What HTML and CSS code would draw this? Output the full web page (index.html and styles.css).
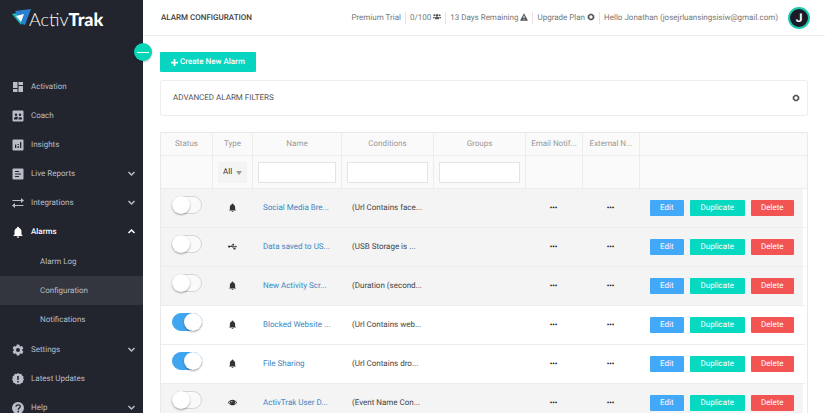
FILE: index.html
```html
<!DOCTYPE html>
<html lang="en">
<head>
<meta charset="utf-8">
<title>Alarm Configuration</title>
<link rel="stylesheet" href="styles.css">
</head>
<body>
<svg class="defs" aria-hidden="true">
  <symbol id="bell" viewBox="0 0 24 24"><path d="M12 1.500a2 2 0 0 0-2 2v.6C7 5 5 7.600 5 11v6l-2 2v1h18v-1l-2-2v-6c0-3.400-2-6-5-6.900v-.6a2 2 0 0 0-2-2zM9.500 21a2.500 2.500 0 0 0 5 0z"/></symbol>
  <symbol id="usb" viewBox="0 0 24 24"><g fill="none" stroke="currentColor" stroke-width="2"><path d="M3 12h18M6 12c4 0 3-5 8-5M9 12c4 0 3 5 8 5"/></g><circle cx="3" cy="12" r="3"/><circle cx="14" cy="7" r="2.500"/><path d="M20 9l4 3-4 3zM15 15h5v5h-5z"/></symbol>
  <symbol id="eye" viewBox="0 0 24 24"><path fill-rule="evenodd" d="M0 12C3 7 7 4.500 12 4.500S21 7 24 12c-3 5-7 7.500-12 7.500S3 17 0 12zm2.500 0c1 1.800 2.800 3.500 5 4.500a6 6 0 0 1 0-9c-2.200 1-4 2.700-5 4.500zm19 0c-1-1.800-2.800-3.500-5-4.500a6 6 0 0 1 0 9c2.200-1 4-2.700 5-4.500zM12 7.500a4 4 0 0 0-4 4h1.500A2.500 2.500 0 0 1 12 9z"/></symbol>
  <symbol id="down" viewBox="0 0 12 12"><path d="M2 4l4 4 4-4" fill="none" stroke="currentColor" stroke-width="2"/></symbol>
  <symbol id="up" viewBox="0 0 12 12"><path d="M2 8l4-4 4 4" fill="none" stroke="currentColor" stroke-width="2"/></symbol>
  <symbol id="ring" viewBox="0 0 24 24"><path fill-rule="evenodd" d="M8.500 2h7L22 8.500v7L15.500 22h-7L2 15.500v-7zM12 7a5 5 0 1 0 0 10 5 5 0 0 0 0-10z"/></symbol>
</svg>
<div class="app">
  <aside class="sidebar">
    <a class="logo" href="#">
      <svg class="logo-mark" viewBox="0 0 19 17" aria-hidden="true"><path fill="#18b9bd" d="M0 5l13-3-4 14z"/><path fill="#2a7fd0" d="M3 2l16-2-6 16-3-1z"/><path fill="#fff" d="M4 7l8-2-3 8z"/></svg>
      <span class="logo-text">Activ<b>Trak</b></span>
    </a>
    <button class="collapse" type="button" aria-label="Collapse menu"><span class="dash"></span></button>
    <nav class="nav">
      <a href="#"><svg class="icon" viewBox="0 0 24 24"><path d="M2 2h9v12H2zM13 2h9v6h-9zM13 10h9v12h-9zM2 16h9v6H2z"/></svg><span>Activation</span></a>
      <a href="#"><svg class="icon" viewBox="0 0 24 24"><path fill-rule="evenodd" d="M3 1h18a2 2 0 0 1 2 2v18a2 2 0 0 1-2 2H3a2 2 0 0 1-2-2V3a2 2 0 0 1 2-2zm5 6a2.500 2.500 0 1 0 0 5 2.500 2.500 0 0 0 0-5zm8 0a2.500 2.500 0 1 0 0 5 2.500 2.500 0 0 0 0-5zM4 19h7v-1c0-2 .5-3 1.500-4-3-1.500-8.500-.5-8.500 3zm9 0h7v-2c0-3-7-3.500-7 0z"/></svg><span>Coach</span></a>
      <a href="#"><svg class="icon" viewBox="0 0 24 24"><path fill-rule="evenodd" d="M3 1h18a2 2 0 0 1 2 2v18a2 2 0 0 1-2 2H3a2 2 0 0 1-2-2V3a2 2 0 0 1 2-2zm3 10v7h2.500v-7zm5 3v4h2.500v-4zm0-4v2h2.500v-2zm5-4v12h2.500V6z"/></svg><span>Insights</span></a>
      <a href="#"><svg class="icon" viewBox="0 0 24 24"><path fill-rule="evenodd" d="M3 1h18a2 2 0 0 1 2 2v18a2 2 0 0 1-2 2H3a2 2 0 0 1-2-2V3a2 2 0 0 1 2-2zm3 5v2h8V6zm0 5v2h12v-2zm0 5v2h8v-2z"/></svg><span>Live Reports</span><svg class="chevron"><use href="#down"/></svg></a>
      <a href="#"><svg class="icon" viewBox="0 0 24 24"><path d="M1 6h17V2l6 5-6 5V8H1zM23 16H6v-4l-6 5 6 5v-4h17z"/></svg><span>Integrations</span><svg class="chevron"><use href="#down"/></svg></a>
      <a class="open" href="#"><svg class="icon"><use href="#bell"/></svg><span>Alarms</span><svg class="chevron"><use href="#up"/></svg></a>
      <div class="subnav">
        <a href="#">Alarm Log</a>
        <a class="current" href="#">Configuration</a>
        <a href="#">Notifications</a>
      </div>
      <a href="#"><svg class="icon" viewBox="0 0 24 24"><path fill-rule="evenodd" d="M9.500 1h5l.7 3 2 1.200 3-1 2.500 4.300L20.500 11v2l2.200 2.500-2.500 4.300-3-1-2 1.200-.7 3h-5l-.7-3-2-1.200-3 1-2.500-4.300L3.500 13v-2L1.300 8.500l2.500-4.300 3 1 2-1.200zM12 8a4 4 0 1 0 0 8 4 4 0 0 0 0-8z"/></svg><span>Settings</span><svg class="chevron"><use href="#down"/></svg></a>
      <a href="#"><svg class="icon" viewBox="0 0 24 24"><path fill-rule="evenodd" d="M12 0l3 2 3.500-.5L20 5l3 2-.5 3.500L24 13l-2 3-.5 3.500-3.500 1-2.500 2.500-3.500-.8L8.500 23 6 20.500l-3.500-1L2 16l-2-3 1.500-2.500L1 7l3-2 1.500-3.500L9 2zm-1.500 6v8h3V6zm0 10v3h3v-3z"/></svg><span>Latest Updates</span></a>
      <a href="#"><svg class="icon" viewBox="0 0 24 24"><circle cx="12" cy="12" r="12"/><path d="M8 9.500c0-5.500 8.500-5 8.500-.5 0 3-4 3-4 6.500" fill="none" stroke="#22252e" stroke-width="2.500"/><path d="M11 17.500h3v3h-3z" fill="#22252e"/></svg><span>Help</span><svg class="chevron"><use href="#down"/></svg></a>
    </nav>
  </aside>
  <div class="page">
    <header class="topbar">
      <h1>ALARM CONFIGURATION</h1>
      <div class="account">
        <span>Premium Trial</span>
        <span>0/100 <svg class="glyph people" viewBox="0 0 24 24"><circle cx="12" cy="7" r="4"/><circle cx="4" cy="7" r="3"/><circle cx="20" cy="7" r="3"/><path d="M0 12h5v4H0zM19 12h5v4h-5zM6 13q6-3 12 0v6H6z"/></svg></span>
        <span>13 Days Remaining <svg class="glyph" viewBox="0 0 24 24"><path fill-rule="evenodd" d="M12 1l12 22H0zm-1.500 7v7h3V8zm0 9v3h3v-3z"/></svg></span>
        <span>Upgrade Plan <svg class="glyph"><use href="#ring"/></svg></span>
        <span>Hello Jonathan (josejrluansingsisiw@gmail.com)</span>
      </div>
      <button class="avatar" type="button">J</button>
    </header>
    <main>
      <button class="btn create" type="button"><svg class="plus" viewBox="0 0 8 8"><path d="M3 0h2v3h3v2H5v3H3V5H0V3h3z"/></svg>Create New Alarm</button>
      <section class="filters">
        <h2>ADVANCED ALARM FILTERS</h2>
        <button class="expand" type="button" aria-label="Show filters"><svg class="glyph"><use href="#ring"/></svg></button>
      </section>
      <div class="grid">
        <table>
          <colgroup><col class="c-status"><col class="c-type"><col class="c-name"><col class="c-text"><col class="c-text"><col class="c-notify"><col class="c-notify"><col></colgroup>
          <thead>
            <tr class="titles"><th>Status</th><th>Type</th><th>Name</th><th>Conditions</th><th>Groups</th><th>Email Notif...</th><th>External N...</th><th></th></tr>
            <tr class="search"><td></td><td><span class="select"><select aria-label="Type"><option>All</option></select></span></td><td><input type="text" aria-label="Name"></td><td><input type="text" aria-label="Conditions"></td><td><input type="text" aria-label="Groups"></td><td></td><td></td><td></td></tr>
          </thead>
          <tbody>
            <tr class="off"><td><input class="switch" type="checkbox" aria-label="Social Media"></td><td class="mid"><svg class="kind"><use href="#bell"/></svg></td><td><a href="#">Social Media Bre...</a></td><td>(Url Contains face...</td><td></td><td class="mid"><b class="dots">•••</b></td><td class="mid"><b class="dots">•••</b></td><td><div class="actions"><button class="btn edit">Edit</button><button class="btn copy">Duplicate</button><button class="btn delete">Delete</button></div></td></tr>
            <tr class="off"><td><input class="switch" type="checkbox" aria-label="Data saved"></td><td class="mid"><svg class="kind wide"><use href="#usb"/></svg></td><td><a href="#">Data saved to US...</a></td><td>(USB Storage is ...</td><td></td><td class="mid"><b class="dots">•••</b></td><td class="mid"><b class="dots">•••</b></td><td><div class="actions"><button class="btn edit">Edit</button><button class="btn copy">Duplicate</button><button class="btn delete">Delete</button></div></td></tr>
            <tr class="off"><td><input class="switch" type="checkbox" aria-label="New Activity"></td><td class="mid"><svg class="kind"><use href="#bell"/></svg></td><td><a href="#">New Activity Scr...</a></td><td>(Duration (second...</td><td></td><td class="mid"><b class="dots">•••</b></td><td class="mid"><b class="dots">•••</b></td><td><div class="actions"><button class="btn edit">Edit</button><button class="btn copy">Duplicate</button><button class="btn delete">Delete</button></div></td></tr>
            <tr><td><input class="switch" type="checkbox" checked aria-label="Blocked Website"></td><td class="mid"><svg class="kind"><use href="#bell"/></svg></td><td><a href="#">Blocked Website ...</a></td><td>(Url Contains web...</td><td></td><td class="mid"><b class="dots">•••</b></td><td class="mid"><b class="dots">•••</b></td><td><div class="actions"><button class="btn edit">Edit</button><button class="btn copy">Duplicate</button><button class="btn delete">Delete</button></div></td></tr>
            <tr><td><input class="switch" type="checkbox" checked aria-label="File Sharing"></td><td class="mid"><svg class="kind"><use href="#bell"/></svg></td><td><a href="#">File Sharing</a></td><td>(Url Contains dro...</td><td></td><td class="mid"><b class="dots">•••</b></td><td class="mid"><b class="dots">•••</b></td><td><div class="actions"><button class="btn edit">Edit</button><button class="btn copy">Duplicate</button><button class="btn delete">Delete</button></div></td></tr>
            <tr class="off"><td><input class="switch" type="checkbox" aria-label="ActivTrak User"></td><td class="mid"><svg class="kind"><use href="#eye"/></svg></td><td><a href="#">ActivTrak User D...</a></td><td>(Event Name Con...</td><td></td><td class="mid"><b class="dots">•••</b></td><td class="mid"><b class="dots">•••</b></td><td><div class="actions"><button class="btn edit">Edit</button><button class="btn copy">Duplicate</button><button class="btn delete">Delete</button></div></td></tr>
          </tbody>
        </table>
      </div>
    </main>
  </div>
</div>
</body>
</html>
```
FILE: styles.css
```css
* { box-sizing: border-box; }

body {
  margin: 0;
  overflow: hidden;
  background: #fff;
  color: #444;
  font: 8px/12px Roboto, sans-serif;
  text-rendering: geometricPrecision;
}

button, input, select { font: inherit; margin: 0; text-rendering: inherit; }
a { text-decoration: none; }
svg { fill: currentColor; flex: none; }
.defs { display: none; }

.app {
  display: flex;
  height: 100vh;
}

/* Sidebar */
.sidebar {
  position: relative;
  flex: none;
  width: 143px;
  background: #22252e;
  color: #b9bdc9;
}

.logo {
  display: flex;
  height: 72px;
  padding: 9px 0 0 12px;
  color: #fff;
}

.logo-mark { width: 19px; height: 17px; }

.logo-text {
  margin-left: -2px;
  font: 300 18px/20px Lato, sans-serif;
}

.logo-text b { font-weight: 900; }

.collapse {
  position: absolute;
  top: 43px;
  right: -9px;
  display: grid;
  place-items: center;
  width: 18px;
  height: 18px;
  padding: 0;
  border: 0;
  border-radius: 50%;
  background: #07d5b8;
  box-shadow: 0 1px 2px rgba(0, 0, 0, .3);
}

.dash { width: 12px; height: 1px; background: #fff; }

.nav a {
  display: flex;
  align-items: center;
  height: 29px;
  padding: 0 7px 0 12px;
  color: inherit;
}

.nav .icon { width: 12px; height: 12px; margin-right: 7px; }
.nav .chevron { width: 9px; height: 9px; margin-left: auto; }
.nav .open { color: #fff; font-weight: 500; }
.subnav { padding: 1px 0; }
.nav .subnav a { padding-left: 40px; }
.nav .subnav .current { background: #34363f; }

/* Top bar */
.page { flex: 1; min-width: 0; }

.topbar {
  display: flex;
  align-items: center;
  height: 36px;
  padding: 0 15px 0 18px;
  border-bottom: 1px solid #eee;
}

h1 {
  margin: 0 auto 0 0;
  color: #3c3c3c;
  font-size: 8px;
  font-weight: 500;
}

.account { display: flex; color: #777; white-space: nowrap; }

.account span {
  padding: 0 4px;
  border-left: 1px solid #e4e4e4;
}

.account span:first-child { border-left: 0; }

.glyph {
  width: 8px;
  height: 8px;
  color: #555;
  vertical-align: -1px;
}

.avatar {
  width: 22px;
  height: 22px;
  margin-left: 6px;
  padding: 0;
  border: 2px solid #1cc9b0;
  border-radius: 50%;
  background: #1b1b26;
  color: #fff;
  font-size: 12px;
  font-weight: 700;
}

/* Content */
main { padding: 16px 17px 0; }

.btn {
  height: 16px;
  padding: 0 10px;
  border: 0;
  border-radius: 1px;
  color: #fff;
  line-height: 16px;
}

.create {
  display: flex;
  align-items: center;
  gap: 2px;
  height: 20px;
  padding: 0 11px;
  background: #07d5c0;
  font-weight: 500;
}

.plus { width: 7px; height: 7px; }

.filters {
  display: flex;
  align-items: center;
  justify-content: space-between;
  height: 36px;
  margin: 8px 0 16px;
  padding: 0 7px 0 12px;
  border: 1px solid #eee;
  border-radius: 2px;
}

h2 { margin: 0; color: #555; font-size: 8px; font-weight: 400; }

.expand {
  display: flex;
  padding: 0;
  border: 0;
  background: none;
}

/* Alarm table */
.grid { border: 1px solid #e9e9e9; }

table {
  width: 100%;
  border-spacing: 0;
  table-layout: fixed;
  white-space: nowrap;
}

.c-status { width: 52px; }
.c-type { width: 40px; }
.c-name { width: 89px; }
.c-text { width: 92px; }
.c-notify { width: 57px; }

th, td { padding: 0 0 0 10px; }

thead th, thead td {
  padding: 0 5px;
  border-right: 1px solid #ececec;
  border-bottom: 1px solid #ececec;
  background: #fafafa;
}

thead th:last-child, thead td:last-child { border-right: 0; }
.titles th { height: 23px; color: #999; font-weight: 400; }
.search td { height: 33px; }

.search input {
  display: block;
  width: 100%;
  height: 21px;
  padding: 0 4px;
  border: 1px solid #e4e4e4;
  background: #fff;
}

.select {
  position: relative;
  display: block;
  background: #f4f4f4;
}

.select::after {
  content: "";
  position: absolute;
  top: 9px;
  right: 5px;
  border: 3px solid transparent;
  border-top: 4px solid #999;
  border-bottom: 0;
}

.select select {
  display: block;
  width: 100%;
  height: 21px;
  padding: 0 5px;
  border: 0;
  appearance: none;
  background: none;
  color: #333;
}

tbody td { height: 39px; border-bottom: 1px solid #ececec; }
tbody td:last-child { border-right: 4px solid #fff; background-clip: padding-box; }
.off td { background-color: #f4f4f4; }
tbody .mid { padding: 0 2px 0 0; text-align: center; }
tbody a { color: #3a87c4; }

.switch {
  display: block;
  width: 30px;
  height: 18px;
  margin: 0 0 6px 1px;
  appearance: none;
  border: 1px solid #d5d5d5;
  border-radius: 9px;
  background: #fafafa;
}

.switch::before {
  content: "";
  display: block;
  width: 18px;
  height: 18px;
  margin: -1px;
  border-radius: 50%;
  background: #fff;
  box-shadow: 0 1px 2px rgba(0, 0, 0, .35);
}

.switch:checked { border-color: #41a6f0; background: #41a6f0; }
.switch:checked::before { margin-left: 11px; }

.kind { width: 9px; height: 9px; color: #333; vertical-align: middle; }
.kind.wide { width: 11px; }
.dots { color: #222; font-size: 7px; }

.actions { display: flex; gap: 6px; }
.edit { background: #42a9f8; }
.copy { padding: 0 11px; background: #07d8c0; }
.delete { background: #f25454; }
```
